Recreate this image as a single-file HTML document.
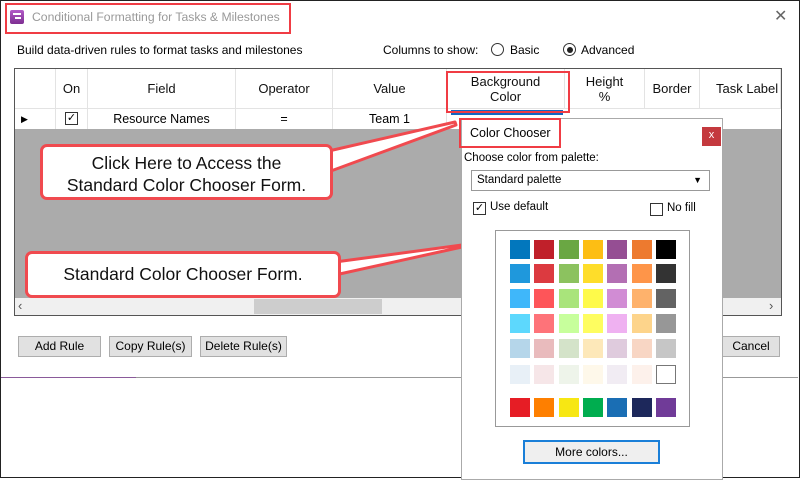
<!DOCTYPE html>
<html><head><style>
*{box-sizing:border-box;margin:0;padding:0}
body{width:800px;height:478px;position:relative;background:#fff;font-family:"Liberation Sans",sans-serif;font-size:12px;color:#000;overflow:hidden}
.a{position:absolute}
.frame{left:0;top:0;width:800px;height:478px;border:1px solid #222}
.hd{position:absolute;top:69px;height:39px;border-right:1px solid #e3e3e3;text-align:center;font-size:13px;color:#111;display:flex;align-items:center;justify-content:center;line-height:15px}
.cell{position:absolute;top:108px;height:21px;border-right:1px solid #e3e3e3;text-align:center;font-size:12.5px;line-height:23px}
.btn{position:absolute;height:21px;background:#e1e1e1;border:1px solid #adadad;font-size:12px;text-align:center;line-height:19px}
.call{position:absolute;background:#fff;border:3px solid #f04a4f;border-radius:7px;font-size:17.5px;text-align:center;color:#111}
.sw{position:absolute;width:20px;height:19px}
</style></head><body>
<div class="a frame"></div>
<div class="a" style="left:5px;top:3px;width:286px;height:31px;border:2px solid #f03c44"></div>
<div class="a" style="left:10px;top:10px;width:14px;height:14px;background:linear-gradient(#b35bc8,#7d2e91);border-radius:2px"></div>
<div class="a" style="left:13px;top:13px;width:8px;height:2px;background:#fff"></div>
<div class="a" style="left:15px;top:17px;width:6px;height:2px;background:#fff"></div>
<div class="a" style="left:32px;top:10px;font-size:12.2px;color:#999">Conditional Formatting for Tasks &amp; Milestones</div>
<div class="a" style="left:774px;top:6px;font-size:16px;color:#666">✕</div>
<div class="a" style="left:17px;top:43px;font-size:12px">Build data-driven rules to format tasks and milestones</div>
<div class="a" style="left:383px;top:43px;font-size:12px">Columns to show:</div>
<div class="a" style="left:491px;top:43px;width:13px;height:13px;border:1px solid #333;border-radius:50%"></div>
<div class="a" style="left:510px;top:43px;font-size:12px">Basic</div>
<div class="a" style="left:563px;top:43px;width:13px;height:13px;border:1px solid #333;border-radius:50%"></div>
<div class="a" style="left:566.5px;top:46.5px;width:6px;height:6px;background:#222;border-radius:50%"></div>
<div class="a" style="left:581px;top:43px;font-size:12px">Advanced</div>
<div class="a" style="left:14px;top:68px;width:768px;height:248px;border:1px solid #555;background:#ababab"></div>
<div class="a" style="left:15px;top:69px;width:766px;height:60px;background:#fff"></div>
<div class="a" style="left:15px;top:108px;width:766px;height:1px;background:#e3e3e3"></div>
<div class="hd" style="left:15px;width:41px"></div>
<div class="hd" style="left:56px;width:32px">On</div>
<div class="hd" style="left:88px;width:148px">Field</div>
<div class="hd" style="left:236px;width:97px">Operator</div>
<div class="hd" style="left:333px;width:114px">Value</div>
<div class="hd" style="left:447px;width:118px">Background<br>Color</div>
<div class="hd" style="left:565px;width:80px;align-items:flex-start;padding-top:5px">Height<br>%</div>
<div class="hd" style="left:645px;width:55px">Border</div>
<div class="hd" style="left:700px;width:81px;justify-content:flex-start;padding-left:16px;overflow:hidden;white-space:nowrap">Task Label</div>
<div class="cell" style="left:15px;width:41px;text-align:left;padding-left:6px;font-size:9px">▶</div>
<div class="cell" style="left:56px;width:32px"><span style="display:inline-block;width:13px;height:13px;border:1px solid #333;margin-top:4px;font-size:11px;line-height:11px;vertical-align:top">✓</span></div>
<div class="cell" style="left:88px;width:148px">Resource Names</div>
<div class="cell" style="left:236px;width:97px">=</div>
<div class="cell" style="left:333px;width:114px">Team 1</div>
<div class="a" style="left:451px;top:110px;width:112px;height:5px;background:#1565c0"></div>
<div class="a" style="left:446px;top:71px;width:124px;height:42px;border:2px solid #f03c44"></div>
<div class="a" style="left:15px;top:298px;width:766px;height:17px;background:#f0f0f0"></div>
<div class="a" style="left:254px;top:299px;width:128px;height:15px;background:#cdcdcd"></div>
<div class="a" style="left:18px;top:298px;font-size:13px;color:#555">‹</div>
<div class="a" style="left:769px;top:298px;font-size:13px;color:#555">›</div>
<div class="btn" style="left:18px;top:336px;width:83px">Add Rule</div>
<div class="btn" style="left:109px;top:336px;width:83px">Copy Rule(s)</div>
<div class="btn" style="left:200px;top:336px;width:87px">Delete Rule(s)</div>
<div class="btn" style="left:722px;top:336px;width:58px">Cancel</div>
<div class="a" style="left:1px;top:377px;width:797px;height:1px;background:#999"></div>
<div class="a" style="left:1px;top:377px;width:135px;height:1px;background:#8a5a9a"></div>
<svg class="a" style="left:0;top:0" width="800" height="478">
<polygon points="320,153 455,122 456,125 320,175" fill="#fff" stroke="#f04a4f" stroke-width="3" stroke-linejoin="round"/>
<polygon points="335,262 462,245 462,247 335,275" fill="#fff" stroke="#f04a4f" stroke-width="3" stroke-linejoin="round"/>
</svg>
<div class="call" style="left:40px;top:144px;width:293px;height:56px;line-height:22px;padding-top:5px">Click Here to Access the<br>Standard Color Chooser Form.</div>
<div class="call" style="left:25px;top:251px;width:316px;height:47px;line-height:41px">Standard Color Chooser Form.</div>
<div class="a" style="left:461px;top:118px;width:262px;height:362px;background:#fff;border:1px solid #aaa"></div>
<div class="a" style="left:459px;top:118px;width:102px;height:30px;border:2px solid #f03c44"></div>
<div class="a" style="left:470px;top:126px;font-size:12.5px">Color Chooser</div>
<div class="a" style="left:702px;top:127px;width:19px;height:19px;background:#c4393e;color:#fff;font-size:11px;text-align:center;line-height:17px">x</div>
<div class="a" style="left:464px;top:152px;font-size:11.5px">Choose color from palette:</div>
<div class="a" style="left:471px;top:170px;width:239px;height:21px;border:1px solid #999;font-size:11.5px;line-height:19px;padding-left:5px">Standard palette<span style="position:absolute;right:7px;font-size:9px">▼</span></div>
<div class="a" style="left:473px;top:202px;width:13px;height:13px;border:1px solid #333;font-size:11px;line-height:11px;text-align:center">✓</div>
<div class="a" style="left:490px;top:201px;font-size:11.5px">Use default</div>
<div class="a" style="left:650px;top:203px;width:13px;height:13px;border:1px solid #333"></div>
<div class="a" style="left:667px;top:202px;font-size:11.5px">No fill</div>
<div class="a" style="left:495px;top:230px;width:195px;height:197px;border:1px solid #999"></div>
<div id="pal"></div>
<div class="a" style="left:523px;top:440px;width:137px;height:24px;border:2px solid #1a7fd8;background:#efefef;text-align:center;line-height:20px;font-size:12px">More colors...</div>
<script>
var rows=[["#0277bd","#c0202a","#6aa743","#fdbe14","#954e93","#ed7a2f","#000"],
["#1f98dc","#dc3a40","#8cc25f","#fedd2a","#b36fb3","#fe9549","#333"],
["#3fb7fa","#fe5559","#a9e47b","#fefa4a","#d18cd4","#feb26c","#636363"],
["#5dd8fd","#fe7379","#c7ff9c","#fefd60","#efb1f1","#fdd48b","#979797"],
["#b5d6ea","#e9bbbd","#d4e3c9","#fde8b9","#dfcbdd","#f8d6c4","#c6c6c6"],
["#e8f0f7","#f6e6e8","#eef4ea","#fef8ea","#f1ecf3","#fdf1eb","#fff"],
["#e61d25","#fe7f00","#f7e713","#00ad4f","#1a6eb4","#1d285b","#703b98"]];
var ys=[240,264,289,314,339,365,398],xs=[510,534,559,583,607,632,656],h="";
rows.forEach(function(r,i){r.forEach(function(c,j){h+='<div class="sw" style="left:'+xs[j]+'px;top:'+ys[i]+'px;background:'+c+(i==5&&j==6?';border:1px solid #777':'')+'"></div>';});});
document.getElementById("pal").innerHTML=h;
</script>
</body></html>
